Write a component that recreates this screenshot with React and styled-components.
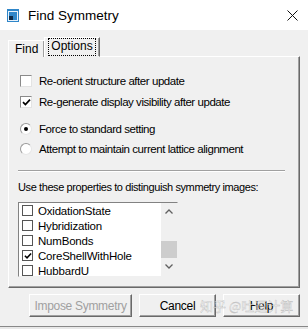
import React from "react";
import styled, { createGlobalStyle } from "styled-components";

const GlobalStyle = createGlobalStyle`
  html, body {
    margin: 0;
    padding: 0;
    background: #f0f0f0;
  }
  body {
    font-family: "Liberation Sans", Arial, sans-serif;
  }
`;

const Window = styled.div`
  position: relative;
  width: 308px;
  height: 329px;
  overflow: hidden;
  background: #f0f0f0;
  display: flex;
  flex-direction: column;
  font-family: "Liberation Sans", Arial, sans-serif;
  font-size: 11px;
  color: #000;
`;

const TitleBar = styled.div`
  height: 30px;
  flex: none;
  background: #fff;
  display: flex;
  align-items: center;
  padding: 0 10px 0 7px;
`;

const Title = styled.span`
  margin-left: 9px;
  font-size: 13.5px;
  color: #000;
  flex: 1;
`;

const Body = styled.div`
  flex: 1;
  display: flex;
  flex-direction: column;
  padding: 7px 8px 0 8px;
`;

const TabStrip = styled.div`
  display: flex;
  align-items: flex-end;
  height: 20px;
  margin-bottom: -1px;
  position: relative;
  z-index: 1;
`;

const Tab = styled.div`
  height: ${(p) => (p.$active ? "20px" : "17px")};
  padding: 0 ${(p) => (p.$active ? "3px" : "6px")};
  box-sizing: border-box;
  display: flex;
  align-items: center;
  background: #f0f0f0;
  border-top: 1px solid #fff;
  border-left: 1px solid #fff;
  border-right: 1px solid #696969;
  box-shadow: inset -1px 0 0 #a0a0a0;
  margin-left: ${(p) => (p.$active ? "-1px" : "0")};
  border-bottom: ${(p) => (p.$active ? "1px solid #f0f0f0" : "none")};
  font-size: 12px;
`;

const FocusLabel = styled.span`
  border: 1px dotted #000;
  padding: 1px 2px 2px;
  line-height: 13px;
`;

const Panel = styled.div`
  width: 292px;
  height: 232px;
  box-sizing: border-box;
  border-top: 1px solid #fff;
  border-left: 1px solid #fff;
  border-right: 1px solid #696969;
  border-bottom: 1px solid #696969;
  box-shadow: inset -1px -1px 0 #a0a0a0;
  display: flex;
  flex-direction: column;
  padding: 16px 12px 0 11px;
`;

const OptionRow = styled.label`
  display: flex;
  align-items: center;
  height: 16px;
  margin-top: ${(p) => p.$gap || 0}px;
  gap: 6px;
  font-size: 11.5px;
  letter-spacing: -0.45px;
`;

const Box = styled.span`
  width: 12px;
  height: 12px;
  box-sizing: border-box;
  border-top: 1px solid #8a8a8a;
  border-left: 1px solid #8a8a8a;
  border-right: 1px solid #e3e3e3;
  border-bottom: 1px solid #e3e3e3;
  background: #fff;
  display: flex;
  align-items: center;
  justify-content: center;
  flex: none;
  margin-right: 1px;
`;

const Radio = styled.span`
  width: 12px;
  height: 12px;
  border-radius: 50%;
  box-sizing: border-box;
  border: 1px solid;
  border-color: #9a9a9a #e6e6e6 #e6e6e6 #9a9a9a;
  background: #fff;
  display: flex;
  align-items: center;
  justify-content: center;
  flex: none;
  margin-right: 1px;
  &::after {
    content: "";
    width: 4px;
    height: 4px;
    border-radius: 50%;
    background: ${(p) => (p.$on ? "#000" : "transparent")};
  }
`;

const Separator = styled.div`
  height: 0;
  border-top: 1px solid #a0a0a0;
  border-bottom: 1px solid #fff;
  margin: 13px 0 0 -2px;
  width: 267px;
`;

const Label = styled.div`
  margin-top: 7px;
  height: 16px;
  line-height: 16px;
  font-size: 11px;
  letter-spacing: -0.4px;
  margin-left: -2px;
`;

const ListBox = styled.div`
  margin-top: 7px;
  margin-left: -2px;
  width: 160px;
  height: 75px;
  box-sizing: border-box;
  border-top: 1px solid #828282;
  border-left: 1px solid #828282;
  border-right: 1px solid #f0f0f0;
  border-bottom: 1px solid #f0f0f0;
  background: #fff;
  display: flex;
  overflow: hidden;
`;

const Items = styled.div`
  flex: 1;
  padding: 0 0 0 3px;
`;

const Item = styled.div`
  height: 15px;
  display: flex;
  align-items: center;
  gap: 5px;
  font-size: 11.5px;
  letter-spacing: -0.2px;
  color: #000;
`;

const SmallBox = styled.span`
  width: 11px;
  height: 11px;
  box-sizing: border-box;
  border: 1px solid #555;
  background: #fff;
  display: flex;
  align-items: center;
  justify-content: center;
  flex: none;
`;

const ScrollBar = styled.div`
  width: 16px;
  background: #f0f0f0;
  display: flex;
  flex-direction: column;
  align-items: center;
  padding-bottom: 1px;
`;

const Arrow = styled.div`
  height: 17px;
  display: flex;
  align-items: center;
  justify-content: center;
`;

const Track = styled.div`
  flex: 1;
  width: 100%;
  display: flex;
  flex-direction: column;
  justify-content: flex-end;
`;

const Thumb = styled.div`
  height: 17px;
  width: 100%;
  background: #cdcdcd;
`;

const ButtonRow = styled.div`
  display: flex;
  justify-content: flex-end;
  gap: 7px;
  margin-top: 6px;
`;

const Button = styled.div`
  width: ${(p) => p.$w}px;
  height: 23px;
  box-sizing: border-box;
  border-top: 1px solid #fff;
  border-left: 1px solid #fff;
  border-right: 1px solid #696969;
  border-bottom: 1px solid #696969;
  box-shadow: inset -1px -1px 0 #a0a0a0;
  background: #f0f0f0;
  display: flex;
  align-items: center;
  justify-content: center;
  font-size: 12px;
  letter-spacing: -0.3px;
  color: ${(p) => (p.$disabled ? "#a0a0a0" : "#000")};
`;

const Watermark = styled.div`
  position: absolute;
  left: 200px;
  top: 298px;
  font-family: "Noto Sans CJK SC", sans-serif;
  font-size: 13px;
  line-height: 16px;
  color: rgba(255, 255, 255, 0.6);
  -webkit-text-stroke: 0.4px rgba(140, 140, 140, 0.55);
  pointer-events: none;
`;

const Footer = styled.div`
  position: absolute;
  left: 0;
  right: 0;
  bottom: 0;
  height: 2px;
  border-top: 1px solid #888;
  background: #e8e8e8;
`;

const CheckMark = ({ size = 9 }) => (
  <svg width={size} height={size} viewBox="0 0 9 9">
    <path d="M1 4.2 L3.4 6.6 L8 1.6" fill="none" stroke="#000" strokeWidth="1.7" />
  </svg>
);

const AppIcon = () => (
  <svg width="12" height="13" viewBox="0 0 12 13">
    <rect x="0" y="0" width="12" height="13" fill="#2f86c9" />
    <rect x="1.5" y="2.5" width="9" height="9" fill="none" stroke="#e8f2fb" strokeWidth="1" />
    <rect x="2" y="7" width="4" height="4" fill="#0e2a47" />
  </svg>
);

const CloseIcon = () => (
  <svg width="11" height="11" viewBox="0 0 11 11">
    <path d="M0.5 0.5 L10.5 10.5 M10.5 0.5 L0.5 10.5" stroke="#111" strokeWidth="1" />
  </svg>
);

const Chevron = ({ down }) => (
  <svg width="8" height="5" viewBox="0 0 8 5">
    <path
      d={down ? "M0.5 0.5 L4 4 L7.5 0.5" : "M0.5 4.5 L4 1 L7.5 4.5"}
      fill="none"
      stroke="#606060"
      strokeWidth="1.3"
    />
  </svg>
);

const properties = [
  { name: "OxidationState", on: false },
  { name: "Hybridization", on: false },
  { name: "NumBonds", on: false },
  { name: "CoreShellWithHole", on: true },
  { name: "HubbardU", on: false },
];

const App = () => {
  return (
    <Window>
      <GlobalStyle />
      <TitleBar>
        <AppIcon />
        <Title>Find Symmetry</Title>
        <CloseIcon />
      </TitleBar>
      <Body>
        <TabStrip>
          <Tab>Find</Tab>
          <Tab $active>
            <FocusLabel>Options</FocusLabel>
          </Tab>
        </TabStrip>
        <Panel>
          <OptionRow>
            <Box />
            Re-orient structure after update
          </OptionRow>
          <OptionRow $gap={5}>
            <Box>
              <CheckMark />
            </Box>
            Re-generate display visibility after update
          </OptionRow>
          <OptionRow $gap={11}>
            <Radio $on />
            Force to standard setting
          </OptionRow>
          <OptionRow $gap={4}>
            <Radio />
            Attempt to maintain current lattice alignment
          </OptionRow>
          <Separator />
          <Label>Use these properties to distinguish symmetry images:</Label>
          <ListBox>
            <Items>
              {properties.map((p) => (
                <Item key={p.name}>
                  <SmallBox>{p.on && <CheckMark size={8} />}</SmallBox>
                  {p.name}
                </Item>
              ))}
            </Items>
            <ScrollBar>
              <Arrow>
                <Chevron />
              </Arrow>
              <Track>
                <Thumb />
              </Track>
              <Arrow>
                <Chevron down />
              </Arrow>
            </ScrollBar>
          </ListBox>
        </Panel>
        <ButtonRow>
          <Button $w={103} $disabled>
            Impose Symmetry
          </Button>
          <Button $w={77}>Cancel</Button>
          <Button $w={77}>Help</Button>
        </ButtonRow>
      </Body>
      <Watermark>知乎 @吐逗计算</Watermark>
      <Footer />
    </Window>
  );
};

export default App;
